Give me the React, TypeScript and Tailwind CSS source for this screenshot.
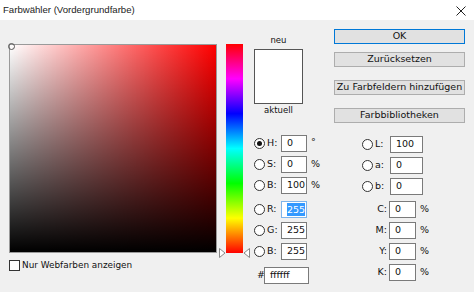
import type { ReactNode } from 'react';

function Radio({ checked = false }: { checked?: boolean }) {
  return (
    <span className="flex h-[11px] w-[11px] shrink-0 items-center justify-center rounded-full border border-[#333] bg-white">
      {checked ? <span className="h-[5px] w-[5px] rounded-full bg-[#111]" /> : null}
    </span>
  );
}

function Field({ value, width, selected = false }: { value: string; width: string; selected?: boolean }) {
  return (
    <span
      className={
        'flex h-[17px] shrink-0 items-center border bg-white pl-[5px] ' +
        width +
        (selected ? ' border-[#7eb4ea]' : ' border-[#7a7a7a]')
      }
    >
      {selected ? <span className="bg-[#3399ff] leading-[13px] text-white">{value}</span> : <span>{value}</span>}
    </span>
  );
}

function Row({ children, className = '' }: { children: ReactNode; className?: string }) {
  return <div className={'flex h-[17px] items-center ' + className}>{children}</div>;
}

function Button({ label, primary = false, className = '' }: { label: string; primary?: boolean; className?: string }) {
  return (
    <div
      className={
        'flex h-[15px] items-center justify-center bg-[#e1e1e1] border ' +
        (primary ? 'border-[#0078d7]' : 'border-[#adadad]') +
        ' ' +
        className
      }
    >
      {label}
    </div>
  );
}

export default function App() {
  const hsbRgb = [
    { key: 'H', value: '0', unit: '°', checked: true, gap: '' },
    { key: 'S', value: '0', unit: '%', gap: 'mt-[4px]' },
    { key: 'B', value: '100', unit: '%', gap: 'mt-[4px]' },
    { key: 'R', value: '255', selected: true, gap: 'mt-[7px]' },
    { key: 'G', value: '255', gap: 'mt-[4px]' },
    { key: 'B', value: '255', gap: 'mt-[4px]' },
  ];
  const lab = [
    { key: 'L', value: '100', gap: '' },
    { key: 'a', value: '0', gap: 'mt-[4px]' },
    { key: 'b', value: '0', gap: 'mt-[4px]' },
  ];
  const cmyk = ['C', 'M', 'Y', 'K'];

  return (
    <div className="h-[294px] w-[474px] overflow-hidden bg-white font-['DejaVu_Sans',sans-serif] text-[9.5px] text-[#111]">
      {/* title bar */}
      <div className="flex h-[20px] items-center justify-between pl-[3px] pr-[8px]">
        <span className="font-['Liberation_Sans',sans-serif] text-[9.6px] text-[#222]">Farbwähler (Vordergrundfarbe)</span>
        <svg width="10" height="10" viewBox="0 0 10 10" className="mt-[2px]">
          <path d="M0.5 0.5 L9.5 9.5 M9.5 0.5 L0.5 9.5" stroke="#222" strokeWidth="1" fill="none" />
        </svg>
      </div>

      <div className="flex h-[272px] bg-[#f0f0f0]">
        {/* colour field */}
        <div className="ml-[9px] w-[208px] shrink-0 pt-[24px]">
          <div className="relative h-[209px] w-[208px] border border-[#9a9a9a] bg-[#ff0000]">
            <div className="h-full w-full bg-[linear-gradient(to_right,#ffffff,rgba(255,255,255,0))]">
              <div className="h-full w-full bg-[linear-gradient(to_bottom,rgba(0,0,0,0),#000000)]" />
            </div>
            <span className="absolute left-[-2px] top-[-2px] h-[7px] w-[7px] rounded-full border border-[#555] bg-transparent" />
          </div>
          <div className="mt-[6px] flex items-center">
            <span className="h-[11px] w-[11px] border border-[#333] bg-white" />
            <span className="ml-[2px] text-[8.9px]">Nur Webfarben anzeigen</span>
          </div>
        </div>

        {/* hue slider */}
        <div className="ml-[9px] w-[17px] shrink-0 pt-[24px]">
          <div className="relative h-[209px] w-[17px] bg-[linear-gradient(to_bottom,#ff0000,#ff00ff,#0000ff,#00ffff,#00ff00,#ffff00,#ff0000)]">
            <svg width="7" height="10" viewBox="0 0 7 10" className="absolute bottom-[-5px] left-[-7px]">
              <path d="M0.5 0.5 L6 5 L0.5 9.5 Z" fill="#fff" stroke="#888" strokeWidth="1" />
            </svg>
            <svg width="7" height="10" viewBox="0 0 7 10" className="absolute bottom-[-5px] right-[-7px]">
              <path d="M6.5 0.5 L1 5 L6.5 9.5 Z" fill="#fff" stroke="#888" strokeWidth="1" />
            </svg>
          </div>
        </div>

        {/* preview + HSB / RGB */}
        <div className="ml-[10px] w-[60px] shrink-0">
          <div className="ml-[1px] flex w-[49px] flex-col items-center pt-[14px]">
            <span className="h-[12px] leading-[12px] text-[8.5px]">neu</span>
            <div className="mt-[3px] h-[55px] w-[49px] border border-[#555] bg-white" />
            <span className="h-[12px] leading-[12px] text-[8.5px]">aktuell</span>
          </div>
          <div className="mt-[19px]">
            {hsbRgb.map((r, i) => (
              <Row key={i} className={r.gap}>
                <span className="ml-[1px] shrink-0">
                  <Radio checked={r.checked} />
                </span>
                <span className="ml-[2px] w-[14px] shrink-0">{r.key}:</span>
                <Field value={r.value} width="w-[26px]" selected={r.selected} />
                {r.unit ? (
                  <span className={'ml-[4px] shrink-0 ' + (r.unit === '°' ? 'self-start' : '')}>{r.unit}</span>
                ) : null}
              </Row>
            ))}
            <Row className="mt-[7px]">
              <span className="ml-[4px] w-[7px] shrink-0">#</span>
              <Field value="ffffff" width="w-[45px]" />
            </Row>
          </div>
        </div>

        {/* buttons + Lab / CMYK */}
        <div className="ml-[21px] w-[131px] shrink-0">
          <Button label="OK" primary className="mt-[9px]" />
          <Button label="Zurücksetzen" className="mt-[8px]" />
          <Button label="Zu Farbfeldern hinzufügen" className="mt-[13px]" />
          <Button label="Farbbibliotheken" className="mt-[13px]" />

          <div className="mt-[13px]">
            {lab.map((r) => (
              <Row key={r.key} className={r.gap}>
                <span className="ml-[28px] shrink-0">
                  <Radio />
                </span>
                <span className="ml-[2px] w-[15px] shrink-0">{r.key}:</span>
                <Field value={r.value} width="w-[33px]" />
              </Row>
            ))}
            {cmyk.map((k, i) => (
              <Row key={k} className={i === 0 ? 'mt-[6px]' : 'mt-[4px]'}>
                <span className="w-[55px] shrink-0 pr-[2px] text-right">{k}:</span>
                <Field value="0" width="w-[27px]" />
                <span className="ml-[4px] shrink-0">%</span>
              </Row>
            ))}
          </div>
        </div>
      </div>
    </div>
  );
}
